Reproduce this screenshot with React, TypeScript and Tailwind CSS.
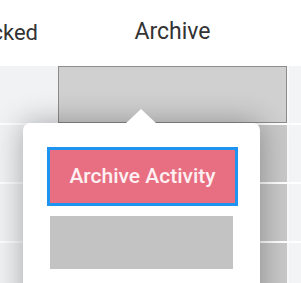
import React from "react";

function Row({ first }: { first?: boolean }) {
  return (
    <div className="flex h-[59px] border-b-2 border-white">
      <div className="w-[58px] bg-[#f1f2f4]" />
      <div className="w-[229px] bg-[#f1f2f4]">
        <div
          className={
            first
              ? "h-full w-full bg-[#d0d0d0] border-[1.5px] border-[#8c8c8c]"
              : "h-full w-full bg-[#c8c8c8]"
          }
        />
      </div>
      <div className="flex-1 bg-[#f3f4f6] border-l-2 border-[#fafafb]" />
    </div>
  );
}

export default function App() {
  return (
    <div
      className="relative w-[301px] h-[283px] overflow-hidden bg-white"
      style={{ fontFamily: "Roboto, 'Liberation Sans', sans-serif" }}
    >
      <div className="flex h-[66px] items-center text-[#333333]">
        <div className="w-[58px] flex justify-end pr-[20px] whitespace-nowrap text-[22px] pb-[2px]">
          Checked
        </div>
        <div className="w-[229px] flex justify-center text-[23px] pb-[2px]">Archive</div>
        <div className="flex-1" />
      </div>
      <div className="flex flex-col">
        <Row first />
        <Row />
        <Row />
        <Row />
      </div>

      <div className="absolute left-[23px] top-[123px] w-[237px] h-[200px] rounded-[7px] bg-white shadow-[0_0_30px_rgba(0,0,0,0.32)] px-[24px] pt-[24px] flex flex-col">
        <div className="w-[191px] h-[59px] border-[3px] border-[#1e93ef] bg-[#e86f81] flex items-center justify-center text-[21px] font-medium text-[#fdf0f2]">
          Archive Activity
        </div>
        <div className="mt-[10px] mx-[3px] h-[53px] bg-[#c3c3c3]" />
      </div>

      <svg
        className="absolute left-[124px] top-[108px]"
        width="34"
        height="17"
        viewBox="0 0 34 17"
      >
        <polygon points="0,17 17,1 34,17" fill="#ffffff" />
      </svg>
    </div>
  );
}
